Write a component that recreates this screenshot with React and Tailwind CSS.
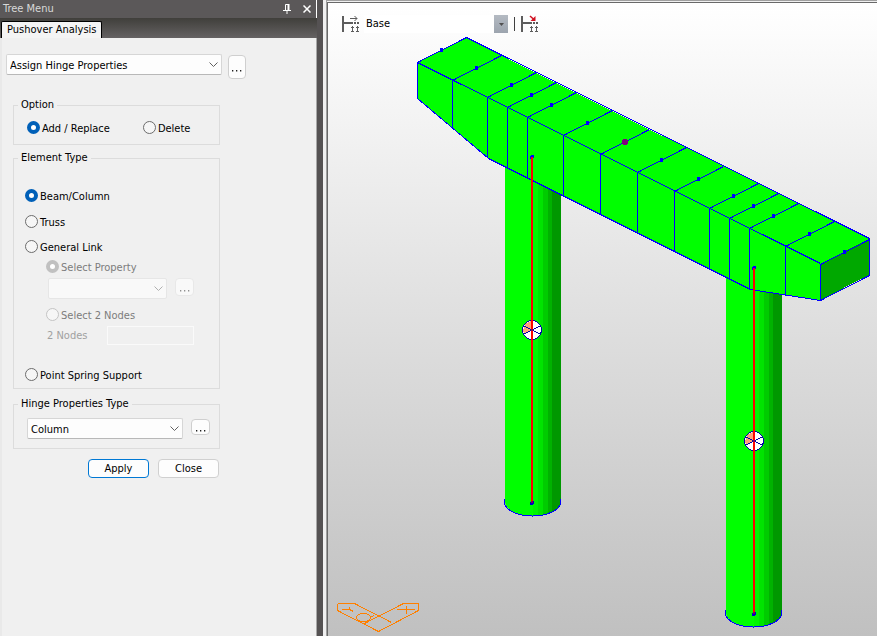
import React from "react";

const stations = [417, 452, 487, 507, 527, 563, 600, 637, 674, 709, 729, 749, 785, 820];
const frontY = (x) => Math.round(62 + (x - 417) * 0.5);
const bottomY = (x) =>
  Math.round(x < 488 ? 98 + ((x - 417) * 60) / 71 : x < 750 ? 158 + (x - 488) * 0.5 : 289 + ((x - 750) * 11) / 70);

const bands = [
  [0, 28, "#00ff00"],
  [28, 5, "#00f600"],
  [33, 5, "#00e400"],
  [38, 5, "#00cc00"],
  [43, 4, "#00b200"],
  [47, 9, "#009800"],
];

function Column({ left, top, base }) {
  const clip = `column-${left}`;
  return (
    <>
      <clipPath id={clip}>
        <path d={`M${left} ${top}H${left + 56}V${base}A28 14 0 0 1 ${left} ${base}Z`} />
      </clipPath>
      <g clipPath={`url(#${clip})`}>
        {bands.map(([x, w, fill]) => (
          <rect key={x} x={left + x} y={top} width={w} height={base - top + 16} fill={fill} />
        ))}
      </g>
      <path
        d={`M${left - 0.5} ${base - 3}V${base}A28 14 0 0 0 ${left + 55.5} ${base}V${base - 3}`}
        fill="none"
        stroke="#0000ff"
      />
    </>
  );
}

function Axis({ x, top, bottom, hinge }) {
  return (
    <>
      <circle cx={x} cy={top} r="2" fill="#0000ff" />
      <circle cx={x} cy={bottom + 1} r="2" fill="#0000c8" />
      <circle cx={x} cy={hinge} r="9.5" fill="#ffffff" />
      <path d={`M${x} ${hinge}V${hinge - 9}A9.5 9.5 0 0 0 ${x - 8} ${hinge + 4}Z`} fill="#ffa07a" />
      <circle cx={x} cy={hinge} r="9.5" fill="none" stroke="#0000a8" />
      <path
        d={`M${x - 8} ${hinge - 4}L${x + 8} ${hinge + 4}M${x - 8} ${hinge + 4}L${x + 8} ${hinge - 4}`}
        stroke="#0000a8"
      />
      <rect x={x - 1} y={top} width="2" height={bottom - top} fill="#ff0000" />
      <circle cx={x} cy={hinge} r="1.5" fill="#8a0050" />
      <circle cx={x} cy={bottom} r="1.5" fill="#8a0050" />
    </>
  );
}

function Model() {
  return (
    <svg
      className="h-[633px] w-[549px] [grid-area:1/1]"
      viewBox="328 3 549 633"
      role="img"
      aria-label="Pier model"
      shapeRendering="crispEdges"
    >
      <Column left={505} top={150} base={502} />
      <Column left={726} top={260} base={613} />
      <path d="M417 62L466 38L869 239V275L820 300L750 289L488 158L417 98Z" fill="#00ff00" />
      <path d="M820 264L869 239V275L820 300Z" fill="#00a800" />
      <g fill="none" stroke="#0000ff">
        <path d="M417.500 62.500L466.500 37.500L869.500 238.500V275.500L820.500 300.500L750.500 289.500L488.500 158.500L417.500 98.500Z" />
        <path d="M417.500 62.500L820.500 263.500" />
        {stations.slice(1).map((x) => (
          <path
            key={x}
            d={`M${x + 0.5} ${bottomY(x) + 0.5}V${frontY(x) + 0.5}L${x + 49.5} ${frontY(x) - 24.5}`}
          />
        ))}
      </g>
      {stations.map((x) =>
        x === 600 ? (
          <circle key={x} cx="625" cy="142" r="3" fill="#800080" />
        ) : (
          <circle key={x} cx={x + 24.5} cy={frontY(x) - 12} r="2" fill="#0000ff" />
        )
      )}
      <Axis x={532} top={157} bottom={502} hinge={330} />
      <Axis x={754} top={268} bottom={613} hinge={441} />
      <g fill="none" stroke="#ff8000">
        <path d="M337.500 603.500H354.500L391.500 622.500M337.500 603.500V610.500L378.500 631.500L418.500 610.500V603.500H403.500L364.500 623.500" />
        <path d="M341.500 609.500H349.500L353.500 611.500M349.500 606.500V609.500M396.500 609.500H414.500M406.500 605.500V613.500M371.500 616.500L374.500 615.500" />
        <ellipse cx="363.500" cy="617.500" rx="7" ry="4" />
      </g>
    </svg>
  );
}

function LevelIcon({ red }) {
  return (
    <svg width="18" height="18" viewBox="0 0 18 18" fill="none" stroke="#5c5c5c" shapeRendering="crispEdges" aria-hidden="true">
      <path d="M1 1V17" strokeWidth="2" />
      <path d="M2 8H11M12 8H14M15 8H17" strokeWidth="2" />
      <path d="M10.500 11V17M15.500 11V17M9 12.500H12M14 12.500H17M9 16.500H12M14 16.500H17" />
      <g shapeRendering="auto">
        {red ? (
          <>
            <path d="M9 1L13 4.500" stroke="#d01020" strokeWidth="1.500" />
            <path d="M14.500 1V6H9.500Z" fill="#d01020" stroke="none" />
          </>
        ) : (
          <path d="M8 3.500H15M12.500 1L15 3.500L12.500 6" />
        )}
      </g>
    </svg>
  );
}

function Select({ label, value, className, disabled }) {
  return (
    <div className={`grid ${className}`}>
      <select
        aria-label={label}
        disabled={disabled}
        className="col-start-1 row-start-1 h-full w-full appearance-none rounded-xs border border-[#d6d6d6] border-b-[#b8b8b8] bg-[#fdfdfd] px-[3px] pt-0.5 disabled:border-[#e6e6e6] disabled:bg-[#f9f9f9]"
      >
        <option>{value}</option>
      </select>
      <svg
        className={`pointer-events-none col-start-1 row-start-1 mr-1 self-center justify-self-end ${disabled ? "text-[#b0b0b0]" : "text-[#606060]"}`}
        width="9"
        height="6"
        viewBox="0 0 9 6"
        fill="none"
        stroke="currentColor"
        aria-hidden="true"
      >
        <path d="M.5 .5L4.500 4.500L8.500 .5" />
      </svg>
    </div>
  );
}

function More({ label, className, disabled }) {
  return (
    <button
      aria-label={label}
      disabled={disabled}
      className={`flex items-center justify-center rounded border border-[#cfcfcf] bg-[#fdfdfd] text-[#202020] disabled:border-[#e8e8e8] disabled:bg-[#f9f9f9] disabled:text-[#909090] ${className}`}
    >
      <svg width="10" height="2" viewBox="0 0 10 2" fill="currentColor" className="mt-[7px]" aria-hidden="true">
        <path d="M0 0h1.300v1.500H0zM4 0h1.300v1.500H4zM8 0h1.300v1.500H8z" />
      </svg>
    </button>
  );
}

function Radio({ name, label, checked, disabled }) {
  return (
    <label className={`flex h-4 items-start gap-0.5 leading-[18px] ${disabled ? "text-[#7c7c7c]" : ""}`}>
      <input
        type="radio"
        name={name}
        defaultChecked={checked}
        disabled={disabled}
        className="mt-px size-[13px] shrink-0 appearance-none rounded-full border border-[#6c6c6c] bg-[#f6f6f6] checked:border-4 checked:border-[#0060b8] checked:bg-white disabled:border-[#c4c4c4] disabled:checked:border-[#c0c0c0]"
      />
      {label}
    </label>
  );
}

function Group({ title, className, children }) {
  return (
    <fieldset className={`min-w-0 border border-[#dcdcdc] ${className}`}>
      <legend className="ml-1 px-[3px] leading-4">{title}</legend>
      {children}
    </fieldset>
  );
}

export default function App() {
  return (
    <div className="flex min-h-screen bg-[#f0f0f0] font-['DejaVu_Sans_Condensed','Noto_Sans',sans-serif] text-[11px] leading-4 text-black">
      <aside className="flex w-[317px] shrink-0 flex-col">
        <header className="flex h-[18px] items-center border-r border-white bg-[#5b5859] pl-[3px] text-[#d8d8d8]">
          <h1 className="grow">Tree Menu</h1>
          <button aria-label="Pin" className="px-1 text-white">
            <svg width="8" height="10" viewBox="0 0 8 10" fill="none" stroke="currentColor" aria-hidden="true">
              <path d="M2.500 6V.5H5.500V6M0 6.500H8M4 6V10" />
              <path d="M5.500 0V6" strokeWidth="2" />
            </svg>
          </button>
          <button aria-label="Close panel" className="pr-[5px] pl-2 text-white">
            <svg width="8" height="8" viewBox="0 0 8 8" fill="none" stroke="currentColor" strokeWidth="1.500" aria-hidden="true">
              <path d="M.5 .5L7.500 7.500M7.500 .5L.5 7.500" />
            </svg>
          </button>
        </header>
        <nav className="flex h-5 items-end bg-linear-to-b from-[#403f3b] to-[#656263] pl-px">
          <button className="h-[17px] rounded-t-xs border-x border-t border-black bg-[#f4f4f4] px-[5px] leading-4">
            Pushover Analysis
          </button>
        </nav>
        <main className="grow border-r border-l-2 border-r-[#a8a8a8] border-l-[#e9e9e9] pl-1">
          <div className="flex gap-1.5 pt-4">
            <Select label="Command" value="Assign Hinge Properties" className="h-[21px] w-[216px]" />
            <More label="Command options" className="mt-px h-6 w-[18px]" />
          </div>
          <div className="flex w-[214px] flex-col pt-[18px] pl-[7px]">
            <Group title="Option" className="h-12">
              <div className="flex gap-[33px] pt-[7px] pl-[13px]">
                <Radio name="option" label="Add / Replace" checked />
                <Radio name="option" label="Delete" />
              </div>
            </Group>
            <Group title="Element Type" className="mt-[5px] h-[239px]">
              <div className="flex flex-col pt-[22px] pl-[11px]">
                <Radio name="element" label="Beam/Column" checked />
                <div className="mt-2.5"><Radio name="element" label="Truss" /></div>
                <div className="mt-[9px]"><Radio name="element" label="General Link" /></div>
                <div className="mt-1 pl-[21px]">
                  <Radio name="link" label="Select Property" checked disabled />
                  <div className="mt-[3px] flex gap-2 pl-0.5">
                    <Select label="Link property" value="" disabled className="h-[21px] w-[119px]" />
                    <More label="Link property options" disabled className="h-[18px] w-[19px]" />
                  </div>
                  <div className="mt-2"><Radio name="link" label="Select 2 Nodes" disabled /></div>
                  <label className="mt-0.5 flex h-5 items-center text-[#a0a0a0]">
                    <span className="w-[61px] pt-0.5 pl-px">2 Nodes</span>
                    <input disabled className="h-[19px] w-[87px] border border-[#fafafa] bg-[#f0f0f0]" />
                  </label>
                </div>
                <div className="mt-[22px]"><Radio name="element" label="Point Spring Support" /></div>
              </div>
            </Group>
            <Group title="Hinge Properties Type" className="mt-[7px] h-[53px]">
              <div className="flex gap-2 pt-1.5 pl-[13px]">
                <Select label="Hinge properties type" value="Column" className="h-[21px] w-[156px]" />
                <More label="Hinge property options" className="mt-px h-4 w-[19px]" />
              </div>
            </Group>
            <div className="mt-2.5 flex justify-end gap-[9px] pr-px">
              <button className="h-[19px] w-[61px] rounded border border-[#0078d4] bg-[#fdfdfd] leading-[18px]">Apply</button>
              <button className="h-[19px] w-[61px] rounded border border-[#d0d0d0] bg-[#fdfdfd] leading-[18px]">Close</button>
            </div>
          </div>
        </main>
      </aside>
      <div className="w-1.5 shrink-0 bg-[#555253]" />
      <section className="ml-[3px] flex min-w-0 grow border-t border-l border-[#a0a0a0] pt-px">
        <div className="grid min-w-0 grow grid-cols-1 content-start overflow-hidden border-t border-l border-[#696969] bg-linear-to-b from-white to-[#c0c0c0]">
          <Model />
          <div className="flex h-[42px] items-center pl-3.5 [grid-area:1/1]">
            <LevelIcon />
            <div className="ml-1 grid h-[18px] w-36 bg-white">
              <select aria-label="Level" className="col-start-1 row-start-1 appearance-none pl-0.5">
                <option>Base</option>
              </select>
              <span className="pointer-events-none col-start-1 row-start-1 flex w-3.5 items-center justify-center justify-self-end bg-linear-to-b from-[#b4bac2] to-[#9ca4ae]">
                <svg width="5" height="3" viewBox="0 0 5 3" fill="#505050" aria-hidden="true"><path d="M0 0H5L2.500 3Z" /></svg>
              </span>
            </div>
            <span className="mx-1.5 h-3.5 w-px bg-[#404040]" />
            <button aria-label="Set level"><LevelIcon red /></button>
          </div>
        </div>
      </section>
    </div>
  );
}
